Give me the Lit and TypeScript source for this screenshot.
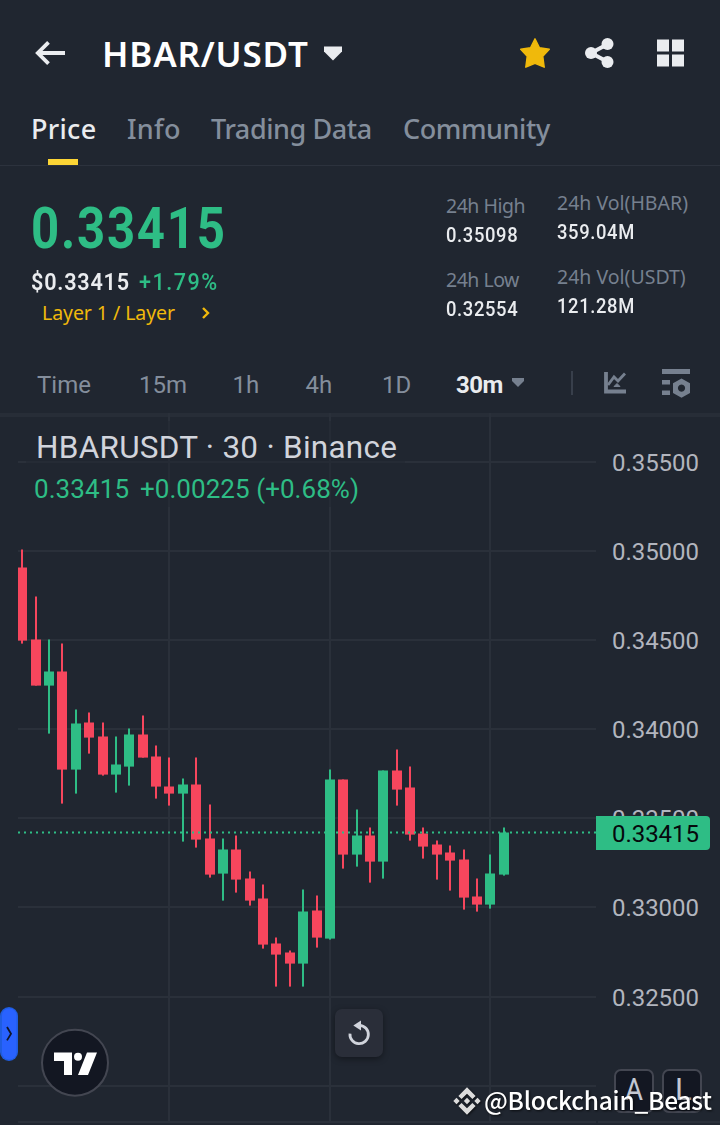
import { LitElement, html, svg, css } from "lit";
import { customElement } from "lit/decorators.js";

type Candle = [x: number, open: number, close: number, high: number, low: number, up: 0 | 1];

// Body left edge, body top, body bottom, wick top, wick bottom, direction
const CANDLES: Candle[] = [
  [17, 567.5, 640.6, 549.5, 643.6, 0],
  [31, 639.5, 685.6, 596.5, 685.6, 0],
  [44, 671.5, 685.6, 639.5, 733.6, 1],
  [57, 671.5, 769.6, 643.5, 803.6, 0],
  [71, 723.5, 769.6, 709.5, 793.6, 1],
  [84, 722.5, 737.6, 712.5, 753.6, 0],
  [98, 736.5, 774.6, 722.5, 775.6, 0],
  [111, 764.5, 774.6, 736.5, 792.6, 1],
  [124, 734.5, 766.6, 728.5, 785.6, 1],
  [138, 734.5, 757.6, 715.5, 757.6, 0],
  [151, 756.5, 786.6, 745.5, 798.6, 0],
  [164, 786.5, 793.6, 757.5, 805.6, 0],
  [178, 784.5, 793.6, 778.5, 841.6, 1],
  [191, 784.5, 839.6, 757.5, 847.6, 0],
  [205, 838.5, 874.6, 804.5, 877.6, 0],
  [218, 849.5, 873.6, 838.5, 900.6, 1],
  [231, 849.5, 879.6, 835.5, 892.6, 0],
  [245, 878.5, 900.6, 871.5, 905.6, 0],
  [258, 898.5, 944.6, 884.5, 948.6, 0],
  [271, 943.5, 954.6, 937.5, 986.6, 0],
  [285, 952.5, 963.6, 950.5, 986.6, 0],
  [298, 911.5, 963.6, 889.5, 986.6, 1],
  [312, 910.5, 937.6, 895.5, 947.6, 0],
  [325, 779.5, 938.6, 769.5, 939.6, 1],
  [338, 779.5, 854.6, 779.5, 868.6, 0],
  [352, 835.5, 854.6, 809.5, 866.6, 1],
  [365, 835.5, 861.6, 827.5, 882.6, 0],
  [378, 770.5, 861.6, 770.5, 878.6, 1],
  [392, 770.5, 789.6, 749.5, 805.6, 0],
  [405, 787.5, 834.6, 766.5, 840.6, 0],
  [418, 833.5, 846.6, 827.5, 858.6, 0],
  [432, 844.5, 854.6, 840.5, 879.6, 0],
  [445, 852.5, 860.6, 845.5, 890.6, 0],
  [459, 859.5, 897.6, 849.5, 909.6, 0],
  [472, 896.5, 904.6, 878.5, 911.6, 0],
  [485, 873.5, 904.6, 854.5, 908.6, 1],
  [499, 832.5, 874.6, 827.5, 875.6, 1],
];

const LEVELS: [number, string][] = [
  [462, "0.35500"], [551, "0.35000"], [640, "0.34500"], [729, "0.34000"],
  [818, "0.33500"], [907, "0.33000"], [997, "0.32500"], [1086, ""],
];

@customElement("price-chart")
class PriceChart extends LitElement {
  static styles = css`
    :host { display: block; height: 712px; }
    svg { display: block; }
    .grid { fill: #2a303a; }
    .up { fill: #2ebd85; }
    .down { fill: #f6465d; }
    .axis { font: 24px Roboto, sans-serif; fill: #b2b5be; }
    .title { font: 31.5px Roboto, sans-serif; fill: #d1d4dc; }
    .change { font: 26px Roboto, sans-serif; fill: #2ebd85; white-space: pre; }
    .last { font: 24px Roboto, sans-serif; fill: #06090d; }
    .key { font: 31px Roboto, sans-serif; fill: #c3c7d3; }
    .mark { font: 500 24.5px "Noto Sans CJK SC", sans-serif; fill: #fff; }
    .shade { filter: drop-shadow(0 2px 3px #0006); }
    .glow { filter: drop-shadow(1px 1px 1px #000a); }
  `;

  render() {
    return html`<svg width="720" height="712" viewBox="0 413 720 712">
      <rect class="grid" y="413" width="720" height="4" opacity=".75" />
      ${LEVELS.map(([y]) => svg`<rect class="grid" x="18" y=${y - 1} width="578" height="2" />`)}
      ${[168, 329, 489].map((x) => svg`<rect class="grid" x=${x} y="413" width="2" height="708" />`)}
      <rect class="grid" x="18" y="1121" width="578" height="2" />
      <rect class="grid" x="598" y="1121" width="122" height="2" />
      <path d="M26 421H405V466H366V507H26Z" fill="#202630" opacity=".5" />
      ${CANDLES.map(([x, top, bottom, high, low, up]) => svg`<g class=${up ? "up" : "down"}>
        <rect x=${Math.max(x, 18)} y=${top} width=${x < 18 ? 9 : 10} height=${bottom - top} />
        <rect x=${x + 4} y=${high} width="2" height=${low - high} />
      </g>`)}
      <path d="M18 832.6H596" stroke="#2ebd85" stroke-width="2" stroke-dasharray="2 4" />

      <text class="title" x="36" y="457.6" textLength="361">HBARUSDT · 30 · Binance</text>
      <text class="change" x="34" y="497.6" textLength="95">0.33415</text>
      <text class="change" x="140" y="497.6" textLength="219">+0.00225 (+0.68%)</text>
      ${LEVELS.map(([y, t]) => svg`<text class="axis" x="612" y=${y + 8.6} textLength=${t ? 87 : 0}>${t}</text>`)}
      <path class="up" d="M596 816H706a4 4 0 0 1 4 4V846a4 4 0 0 1-4 4H596Z" />
      <text class="last" x="612" y="841.6" textLength="87">0.33415</text>

      <rect x="0" y="1007" width="18" height="54" rx="9" fill="#1f5de0" />
      <rect x="2" y="1008.500" width="14.500" height="51" rx="7" fill="#2962ff" />
      <path d="M7 1027l4 6.700-4 6.700" fill="none" stroke="#10162a" stroke-width="1.800" />

      <circle cx="75" cy="1062.700" r="33" fill="#131722" stroke="#434651" stroke-width="2" />
      <g fill="#fff">
        <path d="M54 1052.500H72V1075H64V1061H54Z" />
        <circle cx="78" cy="1056.800" r="4" />
        <path d="M87 1052.500H97L88 1075H78Z" />
      </g>

      <rect class="shade" x="335" y="1009" width="48" height="48" rx="7" fill="#2a2e39" />
      <path d="M350 1033.600A9.200 9.200 0 1 0 359.500 1025.300" fill="none" stroke="#d1d4dc" stroke-width="2.800" />
      <path d="M353.300 1025.500l7.700-5v10Z" fill="#d1d4dc" />

      ${[615, 663].map((x) => svg`<rect x=${x} y="1070" width="38" height="42" rx="6" fill="#131722" stroke="#434651" stroke-width="2" />`)}
      <text class="key" x="634" y="1100" text-anchor="middle" textLength="18" lengthAdjust="spacingAndGlyphs">A</text>
      <text class="key" x="675" y="1100">L</text>

      <g class="glow">
        <g fill="#dcdcdc">
          <path d="M467 1087.300l8.600 8.600-3.200 3.200-5.400-5.400-5.400 5.400-3.200-3.200Z" />
          <path d="M467 1114.700l8.600-8.600-3.200-3.200-5.400 5.400-5.400-5.400-3.200 3.200Z" />
          <path d="M467 1097.800l3.200 3.200-3.200 3.200-3.200-3.200Z" />
          <path d="M456.500 1097.800l3.200 3.200-3.200 3.200-3.200-3.200Z" />
          <path d="M477.500 1097.800l3.200 3.200-3.200 3.200-3.200-3.200Z" />
        </g>
        <text class="mark" x="484" y="1109.700" textLength="228">@Blockchain_Beast</text>
      </g>
    </svg>`;
  }
}

@customElement("app-root")
class AppRoot extends LitElement {
  static styles = css`
    :host {
      display: flex; flex-direction: column; width: 720px; height: 1125px;
      overflow: hidden; background: #202630; color: #eaecef;
      font-family: "Noto Sans", sans-serif;
    }
    * { box-sizing: border-box; white-space: nowrap; }
    svg { display: block; flex: none; }
    header { display: flex; align-items: center; height: 106px; padding: 0 36px 0 35px; }
    h1 { width: 222px; margin: 1px 0 0 37px; font-size: 35px; font-weight: 600; line-height: 48px; color: #fff; letter-spacing: .8px; }
    .spacer { flex: 1; }
    .star { margin-right: 35px; }
    .share { margin-right: 43.500px; }
    nav { display: grid; grid-template-columns: 96px 84px 192px 160px; height: 60px; padding-left: 31px; border-bottom: 1px solid #2c323d; font-size: 27px; font-weight: 500; line-height: 45px; color: #848e9c; }
    .tab { position: relative; }
    .tab:nth-child(1), .tab:nth-child(2) { letter-spacing: .3px; }
    .tab:nth-child(3), .tab:nth-child(4) { letter-spacing: -.42px; }
    .on { color: #eaecef; }
    .on::after { content: ""; position: absolute; left: 17px; top: 52.500px; width: 30px; height: 6.500px; background: #fcd535; }
    .summary { display: flex; height: 188px; padding: 0 0 0 31px; }
    .quote { width: 415px; padding-top: 33px; }
    .price, .sub span, .value { transform-origin: 0 50%; }
    .price { width: 240px; font: 700 56.500px/60px Roboto, sans-serif; color: #2ebd85; letter-spacing: 2px; transform: scaleX(.87); }
    .sub { display: flex; margin-top: 8px; font: 500 23.500px/30px Roboto, sans-serif; }
    .sub span { transform: scaleX(.92); letter-spacing: .85px; }
    .usd { width: 108px; font-weight: 600; }
    .green { color: #2ebd85; }
    .sub .green { letter-spacing: 1.600px; }
    .layer { display: flex; align-items: center; gap: 27px; margin: 2px 0 0 11px; font-size: 19.500px; line-height: 28px; color: #f0b90b; letter-spacing: -.06px; }
    .stats { display: flex; }
    .col { width: 111px; padding-top: 25px; }
    .col.raised { padding-top: 22px; }
    .col.raised .name { letter-spacing: 0; }
    .stat { margin-bottom: 15px; }
    .name { font-size: 19.500px; line-height: 30px; color: #76808f; letter-spacing: -.5px; }
    .value { margin-top: -1px; font: 500 20px/30px Roboto, sans-serif; letter-spacing: .68px; transform: scaleX(.92); }
    .bar { display: flex; align-items: center; height: 59px; padding: 1px 0 0 37px; font: 24px/30px Roboto, sans-serif; color: #848e9c; }
    .slots { display: grid; grid-template-columns: 102px 93.500px 73px 76.500px 74px 56px; padding-top: 2px; }
    .now { font-weight: 700; color: #eaecef; letter-spacing: -.5px; }
    .divider { width: 1.500px; height: 24px; margin: 0 31px 0 47px; background: #383f4b; }
    .bar svg, .divider { position: relative; top: -1px; }
    .tools { margin-left: 36px; }
  `;

  private stat(name: string, value: string) {
    return html`<div class="stat"><div class="name">${name}</div><div class="value">${value}</div></div>`;
  }

  render() {
    return html`
      <header>
        <svg width="30" height="26" viewBox="0 0 30 26" fill="none" stroke="#eaecef" stroke-width="3.800"><path d="M3 13H30M13.500 2.300L2.800 13l10.700 10.700" /></svg>
        <h1>HBAR/USDT</h1>
        <svg width="18" height="15" viewBox="0 0 18 15"><path d="M0 .5H18V5.500L9 14.500 0 5.500Z" fill="#eaecef" /></svg>
        <div class="spacer"></div>
        <svg class="star" width="30" height="32" viewBox="0 0 30 32"><path d="M15 1.800L19.500 10.800 29.300 12.200 22.800 19.300 24.200 30.200 15 26.300 5.800 30.200 7.200 19.300.7 12.200 10.500 10.800Z" fill="#f0b90b" stroke="#f0b90b" stroke-width="1.400" stroke-linejoin="round" /></svg>
        <svg class="share" width="29" height="32" viewBox="0 0 29 32" fill="#eaecef"><path d="M23 7L6 16l17 9" fill="none" stroke="#eaecef" stroke-width="4" /><circle cx="22.500" cy="7" r="6" /><circle cx="6" cy="16" r="6" /><circle cx="22.500" cy="25" r="6" /></svg>
        <svg width="27" height="28" viewBox="0 0 27 28" fill="#eaecef"><path d="M0 .5H12V12.500H0ZM15 .5H27V12.500H15ZM0 15.500H12V27.500H0ZM15 15.500H27V27.500H15Z" /></svg>
      </header>
      <nav>
        <div class="tab on">Price</div>
        <div class="tab">Info</div>
        <div class="tab">Trading Data</div>
        <div class="tab">Community</div>
      </nav>
      <section class="summary">
        <div class="quote">
          <div class="price">0.33415</div>
          <div class="sub"><span class="usd">$0.33415</span><span class="green">+1.79%</span></div>
          <div class="layer"><span>Layer 1 / Layer</span>
            <svg width="8" height="12" viewBox="0 0 8 12" fill="none" stroke="#f0b90b" stroke-width="2.400"><path d="M1 1l5 5-5 5" /></svg>
          </div>
        </div>
        <div class="stats">
          <div class="col">${this.stat("24h High", "0.35098")}${this.stat("24h Low", "0.32554")}</div>
          <div class="col raised">${this.stat("24h Vol(HBAR)", "359.04M")}${this.stat("24h Vol(USDT)", "121.28M")}</div>
        </div>
      </section>
      <div class="bar">
        <div class="slots"><span>Time</span><span>15m</span><span>1h</span><span>4h</span><span>1D</span><span class="now">30m</span></div>
        <svg width="12" height="12" viewBox="0 0 12 12"><path d="M0 1H12V4L6 10 0 4Z" fill="#76808f" /></svg>
        <div class="divider"></div>
        <svg width="22" height="24" viewBox="0 0 22 24" fill="none" stroke="#76808f"><path d="M2 1V20.500H22" stroke-width="3.800" /><path d="M4 14l6-8 4 4 7-7.500" stroke-width="2.800" /><path d="M10 15.500l3-3 3 3Z" fill="#76808f" /></svg>
        <svg class="tools" width="28" height="30" viewBox="0 0 28 30" fill="#76808f"><path d="M0 1H28V6H0ZM0 12H8V16.500H0ZM0 22.500H8V27H0Z" /><path fill-rule="evenodd" d="M19.500 10.500L28 15.300V25L19.500 29.700 11 25V15.300ZM19.500 16.500a3.600 3.600 0 1 0 .01 0Z" /></svg>
      </div>
      <price-chart></price-chart>
    `;
  }
}
